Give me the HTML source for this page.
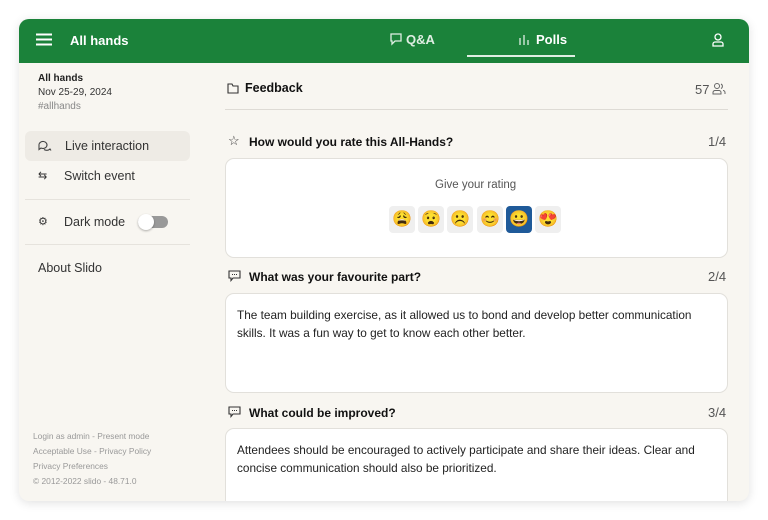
<!DOCTYPE html>
<html><head><style>
*{box-sizing:border-box;margin:0;padding:0}
body{width:768px;height:520px;background:#fff;font-family:"Liberation Sans",sans-serif;position:relative;overflow:hidden}
.app{position:absolute;left:19px;top:19px;width:730px;height:482px;background:#f8f6f1;border-radius:10px;overflow:hidden;box-shadow:0 2px 10px rgba(0,0,0,.12)}
.hdr{position:absolute;left:0;top:0;width:730px;height:44px;background:#1b823a;color:#fff}
.t{position:absolute;white-space:nowrap}
.sb{font-size:12.5px;color:#333}
.card{position:absolute;left:206px;width:503px;background:#fff;border:1px solid #e2e0db;border-radius:9px}
.q{font-size:12px;font-weight:bold;color:#111}
.n{font-size:13px;color:#555}
.ans{font-size:11.8px;color:#222;line-height:18px;position:absolute;left:11px;top:12px;width:470px}
.emo{position:absolute;top:187px;width:26px;height:27px;border-radius:4px;background:#efefef;font-size:16px;text-align:center;line-height:27px}
.foot{font-size:8.4px;color:#999;left:14px}
</style></head><body>
<div class="app">
 <div class="hdr">
  <svg class="t" style="left:17px;top:14px" width="16" height="13"><path d="M0 1.5H16M0 6.5H16M0 11.5H16" stroke="#fff" stroke-width="2"/></svg>
  <div class="t" style="left:51px;top:14px;font-size:13px;font-weight:bold">All hands</div>
  <svg class="t" style="left:370px;top:13px" width="14" height="14"><path d="M2 2h10v7H6l-3 3v-3H2z" fill="none" stroke="#dfeee3" stroke-width="1.3"/></svg>
  <div class="t" style="left:387px;top:13px;font-size:13px;font-weight:bold;color:#dfeee3">Q&amp;A</div>
  <svg class="t" style="left:500px;top:14px" width="10" height="12"><path d="M1 5v7M5 2v10M9 7v5" stroke="#dfeee3" stroke-width="1.3"/></svg>
  <div class="t" style="left:517px;top:13px;font-size:13px;font-weight:bold">Polls</div>
  <div class="t" style="left:448px;top:36px;width:108px;height:2px;background:#dfeee3"></div>
  <svg class="t" style="left:693px;top:14px" width="12" height="14"><circle cx="6" cy="4" r="3" fill="none" stroke="#fff" stroke-width="1.3"/><path d="M1 13v-2a2 2 0 0 1 2-2h6a2 2 0 0 1 2 2v2z" fill="none" stroke="#fff" stroke-width="1.3"/></svg>
 </div>
 <div class="t sb" style="left:19px;top:54px;font-size:10px;font-weight:bold;color:#222">All hands</div>
 <div class="t sb" style="left:19px;top:68px;font-size:10px">Nov 25-29, 2024</div>
 <div class="t sb" style="left:19px;top:82px;font-size:10px;color:#888">#allhands</div>
 <div class="t" style="left:6px;top:112px;width:165px;height:30px;background:#eeebe5;border-radius:6px"></div>
 <svg class="t" style="left:19px;top:121px" width="14" height="12"><path d="M1 5a4 3.5 0 1 1 2 3l-2 1.5z" fill="none" stroke="#444" stroke-width="1.1"/><path d="M6 9.5a4 3 0 0 0 6-0.5l1 1.5" fill="none" stroke="#444" stroke-width="1.1"/></svg>
 <div class="t sb" style="left:46px;top:120px">Live interaction</div>
 <div class="t sb" style="left:19px;top:150px;font-size:11px">⇆</div>
 <div class="t sb" style="left:45px;top:150px">Switch event</div>
 <div class="t" style="left:6px;top:180px;width:165px;height:1px;background:#e6e3dd"></div>
 <div class="t sb" style="left:19px;top:196px;font-size:11px">⚙</div>
 <div class="t sb" style="left:45px;top:196px">Dark mode</div>
 <div class="t" style="left:119px;top:197px;width:30px;height:12px;background:#999;border-radius:6px"></div>
 <div class="t" style="left:119px;top:195px;width:16px;height:16px;background:#fff;border-radius:8px;box-shadow:0 1px 2px rgba(0,0,0,.3)"></div>
 <div class="t" style="left:6px;top:225px;width:165px;height:1px;background:#e6e3dd"></div>
 <div class="t sb" style="left:19px;top:242px">About Slido</div>
 <div class="t foot" style="top:412px">Login as admin - Present mode</div>
 <div class="t foot" style="top:427px">Acceptable Use - Privacy Policy</div>
 <div class="t foot" style="top:442px">Privacy Preferences</div>
 <div class="t foot" style="top:457px">© 2012-2022 slido - 48.71.0</div>

 <svg class="t" style="left:208px;top:64px" width="12" height="11"><path d="M1 1h4l1 2h5v7H1z" fill="none" stroke="#333" stroke-width="1.1"/></svg>
 <div class="t q" style="left:226px;top:62px;font-size:12.5px">Feedback</div>
 <div class="t n" style="left:676px;top:63px">57</div>
 <svg class="t" style="left:693px;top:63px" width="15" height="13"><circle cx="5" cy="4" r="2.5" fill="none" stroke="#666"/><path d="M1 12v-1.5a2 2 0 0 1 2-2h4a2 2 0 0 1 2 2V12zM9 2a2.5 2.5 0 0 1 0 4.5M11 8.5a2 2 0 0 1 2 2V12" fill="none" stroke="#666"/></svg>
 <div class="t" style="left:206px;top:90px;width:503px;height:1px;background:#dedbd5"></div>

 <div class="t" style="left:209px;top:114px;font-size:13px;color:#333">☆</div>
 <div class="t q" style="left:230px;top:116px">How would you rate this All-Hands?</div>
 <div class="t n" style="left:689px;top:115px">1/4</div>
 <div class="card" style="top:139px;height:100px"></div>
 <div class="t" style="left:416px;top:160px;font-size:11.5px;color:#555">Give your rating</div>
 <div class="emo" style="left:370px">😩</div>
 <div class="emo" style="left:399px">😧</div>
 <div class="emo" style="left:428px">☹️</div>
 <div class="emo" style="left:458px">😊</div>
 <div class="emo" style="left:487px;background:#1f5a99">😀</div>
 <div class="emo" style="left:516px">😍</div>

 <svg class="t" style="left:209px;top:251px" width="13" height="12"><path d="M1 1h11v7H5l-2 2.5V8H1z" fill="none" stroke="#333" stroke-width="1.1"/><path d="M4 4.5h1M6 4.5h1M8 4.5h1" stroke="#333"/></svg>
 <div class="t q" style="left:230px;top:251px">What was your favourite part?</div>
 <div class="t n" style="left:689px;top:250px">2/4</div>
 <div class="card" style="top:274px;height:100px"><div class="ans">The team building exercise, as it allowed us to bond and develop better communication skills. It was a fun way to get to know each other better.</div></div>

 <svg class="t" style="left:209px;top:387px" width="13" height="12"><path d="M1 1h11v7H5l-2 2.5V8H1z" fill="none" stroke="#333" stroke-width="1.1"/><path d="M4 4.5h1M6 4.5h1M8 4.5h1" stroke="#333"/></svg>
 <div class="t q" style="left:230px;top:387px">What could be improved?</div>
 <div class="t n" style="left:689px;top:386px">3/4</div>
 <div class="card" style="top:409px;height:100px"><div class="ans">Attendees should be encouraged to actively participate and share their ideas. Clear and concise communication should also be prioritized.</div></div>
</div>
</body></html>
